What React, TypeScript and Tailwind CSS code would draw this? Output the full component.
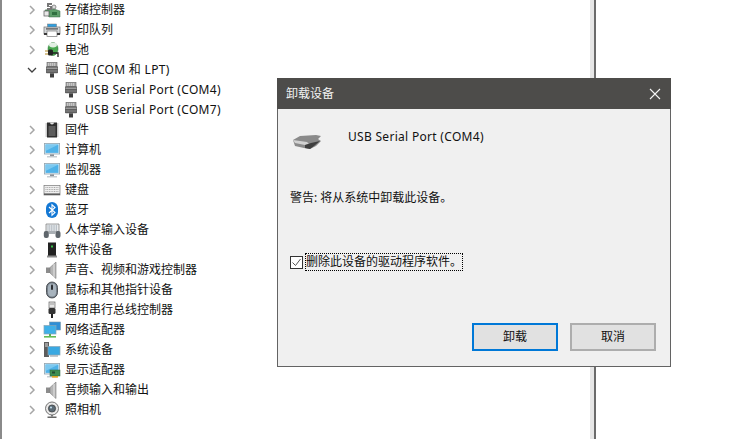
import type { ReactNode } from 'react';

const font = { sans: "font-['Noto_Sans','Noto_Sans_CJK_SC',sans-serif]" };

function Icon({ children }: { children: ReactNode }) {
  return (
    <svg width="18" height="18" viewBox="0 0 18 18" className="shrink-0">
      {children}
    </svg>
  );
}

const Screen = ({ stand = '#8a8f96' }: { stand?: string }) => (
  <>
    <rect x="1.4" y="2.4" width="15.2" height="10.6" fill="#e8f2f8" stroke="#8fa3b0" strokeWidth="0.8" />
    <rect x="2.5" y="3.5" width="13" height="8.4" fill="#4fb2e8" />
    <path d="M2.5 3.5h13L2.5 10z" fill="#7cc8ef" />
    <rect x="7" y="13.4" width="4" height="1.8" fill={stand} />
    <rect x="4" y="15.2" width="10" height="1.2" fill="#b9c0c6" />
  </>
);

const Speaker = () => (
  <>
    <path d="M3 6.5h4v5.5H3z" fill="#8c8c8c" />
    <path d="M7 6.5l6-5.5v16.5l-6-5.5z" fill="#b5b5b5" stroke="#7c7c7c" strokeWidth="0.6" />
    <path d="M11 3v13" stroke="#e4e4e4" strokeWidth="1" />
  </>
);

const PortIcon = () => (
  <Icon>
    <rect x="4" y="1.3" width="10" height="4" fill="#a8a8a8" stroke="#666" strokeWidth="0.6" />
    <path d="M5 2.8h8M5 4.1h8" stroke="#ececec" strokeWidth="0.7" strokeDasharray="1 1" />
    <rect x="3" y="5.3" width="12" height="7" rx="0.8" fill="#5f5f5f" />
    <rect x="3.5" y="6.6" width="11" height="1.3" fill="#a4a4a4" />
    <rect x="3.5" y="9.5" width="11" height="1" fill="#8b8b8b" />
    <rect x="7" y="12.3" width="4" height="4.2" fill="#3e3e3e" />
  </Icon>
);

const icons: Record<string, ReactNode> = {
  storage: (
    <Icon>
      <path d="M2 9l9-1 6 2v6H6z" fill="#5d9e6a" stroke="#3b6a48" strokeWidth="0.5" />
      <rect x="9" y="11" width="5" height="3" fill="#2f6f3f" />
      <path d="M4 2h5v2H6v1h3v4H4V7h3V6H4z" fill="#777" />
      <circle cx="11" cy="6" r="2" fill="#ddd" stroke="#666" strokeWidth="0.7" />
      <rect x="1" y="10" width="5" height="5" fill="#e8e8e8" stroke="#555" strokeWidth="0.7" />
    </Icon>
  ),
  printer: (
    <Icon>
      <rect x="4.5" y="3" width="9" height="3.5" fill="#2f9fe0" stroke="#777" strokeWidth="0.5" />
      <rect x="1" y="6" width="16" height="7" fill="#d5d8da" stroke="#6f6f6f" strokeWidth="0.7" />
      <rect x="3" y="7.3" width="12" height="1.2" fill="#4f4f4f" />
      <rect x="4" y="10" width="10" height="5.5" fill="#fff" stroke="#777" strokeWidth="0.7" />
      <rect x="1" y="12" width="3" height="2" fill="#3a3a3a" />
      <rect x="14" y="12" width="3" height="2" fill="#3a3a3a" />
    </Icon>
  ),
  battery: (
    <Icon>
      <ellipse cx="10" cy="8" rx="5" ry="6.5" fill="#49a84f" stroke="#2f7a3a" strokeWidth="0.6" />
      <ellipse cx="10" cy="4" rx="4" ry="2.4" fill="#e3efe3" />
      <path d="M2 10h4M2 13h4" stroke="#b38a25" strokeWidth="1.2" />
      <rect x="5" y="8.5" width="5" height="6" rx="1.5" fill="#222" />
      <path d="M10 12h5v4" stroke="#222" strokeWidth="1.3" fill="none" />
    </Icon>
  ),
  port: <PortIcon />,
  chip: (
    <Icon>
      <rect x="4" y="1.5" width="10" height="15" fill="#2f2f2f" />
      <path d="M2.5 3h1.5M2.5 5h1.5M2.5 7h1.5M2.5 9h1.5M2.5 11h1.5M2.5 13h1.5M2.5 15h1.5M14 3h1.5M14 5h1.5M14 7h1.5M14 9h1.5M14 11h1.5M14 13h1.5M14 15h1.5" stroke="#9a9a9a" strokeWidth="1" />
      <path d="M7 1.5a2 2 0 0 0 4 0" fill="#e4e4e4" />
      <rect x="5.5" y="5" width="7" height="10" fill="#5c5c5c" />
    </Icon>
  ),
  computer: (
    <Icon>
      <Screen />
    </Icon>
  ),
  monitor: (
    <Icon>
      <Screen />
    </Icon>
  ),
  keyboard: (
    <Icon>
      <rect x="1" y="4.5" width="16" height="9.5" fill="#efefef" stroke="#777" strokeWidth="0.7" />
      <path d="M2.5 6.5h13M2.5 8.5h13M2.5 10.5h13" stroke="#a9a9a9" strokeWidth="1" strokeDasharray="1 0.7" />
      <rect x="1" y="12.4" width="16" height="1.6" fill="#5c5c5c" />
    </Icon>
  ),
  bluetooth: (
    <Icon>
      <rect x="3" y="1" width="12" height="16" rx="6" fill="#1478d4" />
      <path d="M6 6l6 5.5-3 2.8V3.7l3 2.8-6 5.5" fill="none" stroke="#fff" strokeWidth="1.1" />
    </Icon>
  ),
  hid: (
    <Icon>
      <path d="M3 3h13v8H3z" fill="#e9ebed" stroke="#777" strokeWidth="0.7" />
      <path d="M4.5 5h10M4.5 7h10M4.5 9h10" stroke="#8a97a3" strokeWidth="1" strokeDasharray="1 0.7" />
      <rect x="0.8" y="10" width="5" height="7" rx="2" fill="#5f666c" />
      <rect x="12.5" y="10" width="5" height="7" rx="2" fill="#5f666c" />
      <rect x="6" y="10" width="6.5" height="3" fill="#aab0b5" />
    </Icon>
  ),
  software: (
    <Icon>
      <rect x="5" y="1.5" width="8" height="14" fill="#222" />
      <rect x="8" y="4.5" width="2" height="2" fill="#37c24a" />
      <rect x="4" y="14.5" width="10" height="2" fill="#8c8c8c" />
    </Icon>
  ),
  sound: (
    <Icon>
      <Speaker />
    </Icon>
  ),
  mouse: (
    <Icon>
      <rect x="3.5" y="1" width="11" height="16" rx="5.5" fill="#77808a" stroke="#363b40" strokeWidth="0.8" />
      <rect x="5" y="2.5" width="8" height="13" rx="4" fill="#a7b3bd" />
      <rect x="8" y="3.5" width="2" height="5.5" rx="1" fill="#2c2f33" />
    </Icon>
  ),
  usb: (
    <Icon>
      <rect x="6" y="1" width="6" height="6" fill="#e6e6e6" stroke="#666" strokeWidth="0.7" />
      <rect x="7.5" y="2.5" width="1" height="1" fill="#555" />
      <rect x="9.5" y="2.5" width="1" height="1" fill="#555" />
      <rect x="5.5" y="7" width="7" height="6" rx="1.5" fill="#333" />
      <rect x="8" y="13" width="2" height="4" fill="#222" />
    </Icon>
  ),
  network: (
    <Icon>
      <rect x="6.5" y="1" width="11" height="8" fill="#2f8fd6" stroke="#7c98a8" strokeWidth="0.6" />
      <rect x="1" y="4.5" width="12" height="8.5" fill="#3fb0e8" stroke="#8aa5b4" strokeWidth="0.7" />
      <path d="M7 13v2" stroke="#5fae52" strokeWidth="2" />
      <rect x="1" y="15" width="12" height="1.6" fill="#62bb55" />
    </Icon>
  ),
  system: (
    <Icon>
      <rect x="1" y="1" width="5" height="15" fill="#5d5d5d" />
      <rect x="2" y="2.5" width="3" height="1" fill="#ddd" />
      <rect x="2" y="4.5" width="3" height="1" fill="#ddd" />
      <rect x="5" y="5.5" width="12" height="8.5" fill="#39a8e2" stroke="#8aa5b4" strokeWidth="0.7" />
      <rect x="7" y="14" width="8" height="1.8" fill="#b5bcc2" />
    </Icon>
  ),
  display: (
    <Icon>
      <Screen />
      <rect x="7" y="9" width="10" height="6" fill="#3d8f52" stroke="#25603a" strokeWidth="0.5" />
      <rect x="9" y="15" width="6" height="1.6" fill="#d9a520" />
      <rect x="9" y="10.5" width="3" height="2" fill="#214f31" />
    </Icon>
  ),
  audio: (
    <Icon>
      <Speaker />
    </Icon>
  ),
  camera: (
    <Icon>
      <circle cx="9" cy="7.5" r="6.5" fill="#e9e9e9" stroke="#555" strokeWidth="0.8" />
      <circle cx="9" cy="7.5" r="3.6" fill="#5b6a75" stroke="#333" strokeWidth="0.7" />
      <circle cx="8" cy="6.5" r="1.1" fill="#b9d4e4" />
      <rect x="8" y="14" width="2" height="1.5" fill="#777" />
      <rect x="4.5" y="15.5" width="9" height="1.5" fill="#666" />
    </Icon>
  ),
};

type Row = { label: string; icon: string; open?: boolean; child?: boolean };

const rows: Row[] = [
  { label: '存储控制器', icon: 'storage' },
  { label: '打印队列', icon: 'printer' },
  { label: '电池', icon: 'battery' },
  { label: '端口 (COM 和 LPT)', icon: 'port', open: true },
  { label: 'USB Serial Port (COM4)', icon: 'port', child: true },
  { label: 'USB Serial Port (COM7)', icon: 'port', child: true },
  { label: '固件', icon: 'chip' },
  { label: '计算机', icon: 'computer' },
  { label: '监视器', icon: 'monitor' },
  { label: '键盘', icon: 'keyboard' },
  { label: '蓝牙', icon: 'bluetooth' },
  { label: '人体学输入设备', icon: 'hid' },
  { label: '软件设备', icon: 'software' },
  { label: '声音、视频和游戏控制器', icon: 'sound' },
  { label: '鼠标和其他指针设备', icon: 'mouse' },
  { label: '通用串行总线控制器', icon: 'usb' },
  { label: '网络适配器', icon: 'network' },
  { label: '系统设备', icon: 'system' },
  { label: '显示适配器', icon: 'display' },
  { label: '音频输入和输出', icon: 'audio' },
  { label: '照相机', icon: 'camera' },
];

function Chevron({ open }: { open?: boolean }) {
  return (
    <svg width="10" height="10" viewBox="0 0 10 10" className="shrink-0">
      {open ? (
        <path d="M1 3l4 4 4-4" fill="none" stroke="#404040" strokeWidth="1.3" />
      ) : (
        <path d="M3 1l4 4-4 4" fill="none" stroke="#a6a6a6" strokeWidth="1.5" />
      )}
    </svg>
  );
}

function TreeRow({ row }: { row: Row }) {
  if (row.child) {
    return (
      <div className="flex h-5 items-center pl-[60px]">
        {icons[row.icon]}
        <span className="ml-[5px] whitespace-nowrap tracking-[0.3px]">{row.label}</span>
      </div>
    );
  }
  return (
    <div className="flex h-5 items-center pl-[25px]">
      <span className="w-[16px]">
        <Chevron open={row.open} />
      </span>
      {icons[row.icon]}
      <span className={`ml-[4px] whitespace-nowrap ${row.open ? 'tracking-[0.3px]' : ''}`}>{row.label}</span>
    </div>
  );
}

function Dialog() {
  return (
    <div className="absolute left-[277px] top-[78px] flex h-[289px] w-[394px] flex-col border border-t-0 border-[#636363] bg-[#f0f0f0] text-[12px] text-[#111]">
      <div className="-mx-px flex h-[31px] shrink-0 items-center justify-between bg-[#4d4c4a] pl-[9px] pr-[10px] text-[#f2f2f2]">
        <span>卸载设备</span>
        <svg width="12" height="12" viewBox="0 0 12 12">
          <path d="M1 1l10 10M11 1L1 11" stroke="#f5f5f5" strokeWidth="1.1" />
        </svg>
      </div>
      <div className="flex flex-1 flex-col px-[12px]">
        <div className="flex h-[45px] items-start pt-[20px]">
          <svg width="32" height="22" viewBox="0 0 32 22" className="ml-[2px] mt-[2px] shrink-0">
            <path d="M1 9l7-4 16-1 5 1-3 3 3 2-5 5-6 3-6-1-9-2z" fill="#8a8a8a" />
            <path d="M1 9l14 2 2 2-4 1-10-2z" fill="#d2d2d2" />
            <path d="M13 14l6-2 9-2-6 5-4 3-5-1z" fill="#3f3f3f" />
          </svg>
          <span className="ml-[24px] mt-[-1px] whitespace-nowrap tracking-[0.3px]">USB Serial Port (COM4)</span>
        </div>
        <p className="mt-[35px] whitespace-nowrap">警告: 将从系统中卸载此设备。</p>
        <div className="mt-[46px] flex items-center">
          <span className="flex h-[13px] w-[13px] items-center justify-center border border-[#333] bg-white">
            <svg width="11" height="11" viewBox="0 0 11 11">
              <path d="M1.5 5.5l3 3 5-6.5" fill="none" stroke="#555" strokeWidth="1" />
            </svg>
          </span>
          <span className="ml-[2px] border border-dotted border-black leading-[16px]">
            删除此设备的驱动程序软件。
          </span>
        </div>
        <div className="mt-auto mb-[15px] flex justify-end gap-[12px] pr-[2px]">
          <button className="h-[28px] w-[86px] border-2 border-[#0078d7] bg-[#e1e1e1]">卸载</button>
          <button className="h-[28px] w-[86px] border-2 border-[#adadad] bg-[#e1e1e1]">取消</button>
        </div>
      </div>
    </div>
  );
}

export default function App() {
  return (
    <div className={`relative flex h-[439px] w-[746px] overflow-hidden bg-white text-[12px] text-[#111] ${font.sans}`}>
      <div className="h-full w-[2px] shrink-0 bg-[#8a8a8a]" />
      <div className="w-[588px] shrink-0">
        {rows.map((row, i) => (
          <TreeRow key={i} row={row} />
        ))}
      </div>
      <div className="h-full w-[4px] shrink-0 bg-[#e6e6e6]" />
      <div className="h-full w-[2px] shrink-0 bg-[#6b6b6b]" />
      <Dialog />
    </div>
  );
}
